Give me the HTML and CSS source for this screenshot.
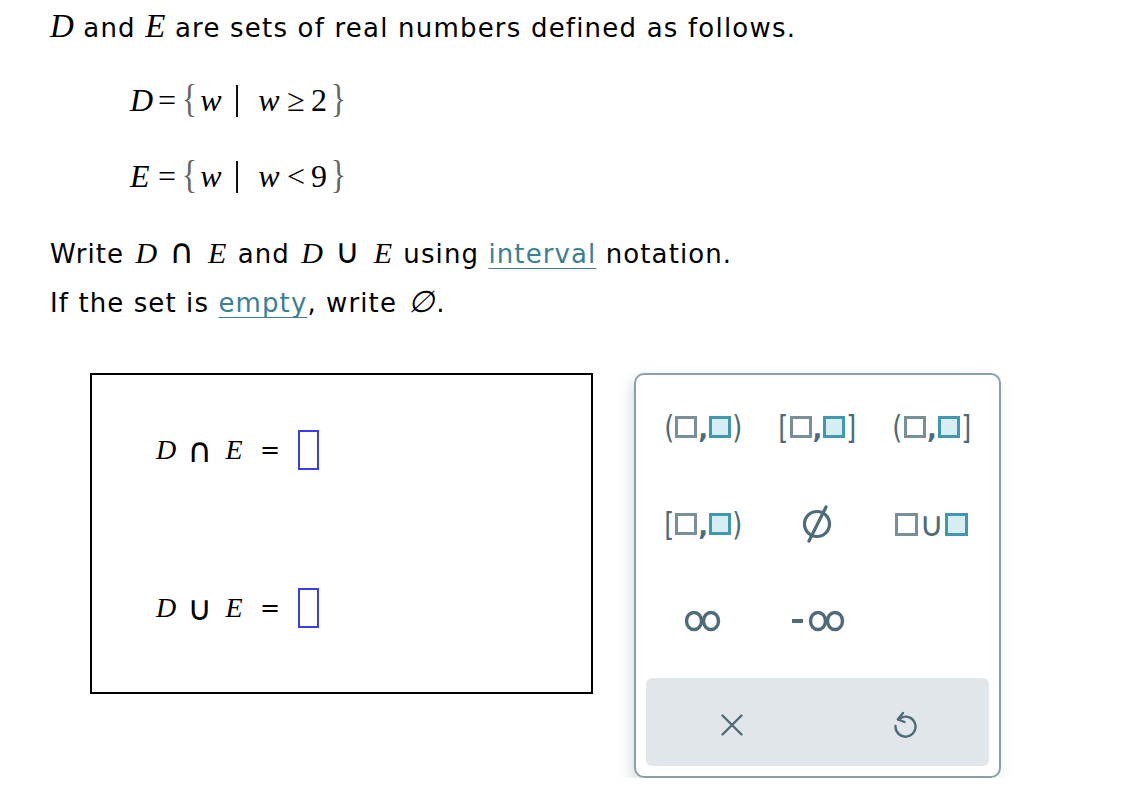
FILE: index.html
```html
<!DOCTYPE html>
<html>
<head>
<meta charset="utf-8">
<link rel="stylesheet" href="styles.css">
</head>
<body>
<div class="page">
  <p class="intro"><span class="mi big">D</span> and <span class="mi big">E</span> are sets of real numbers defined as follows.</p>
  <div class="defs">
    <div class="def"><span class="t tD">D</span><span class="t teq">=</span><span class="t tb">{</span><span class="t tw">w</span><span class="bar"></span><span class="t tw">w</span><span class="t trel">≥</span><span class="t tn">2</span><span class="t tb">}</span></div>
    <div class="def"><span class="t tD">E</span><span class="t teq">=</span><span class="t tb">{</span><span class="t tw">w</span><span class="bar"></span><span class="t tw">w</span><span class="t trel">&lt;</span><span class="t tn">9</span><span class="t tb">}</span></div>
  </div>
  <p class="instr first">Write <span class="mi">D</span> <span class="so">∩</span> <span class="mi">E</span> and <span class="mi">D</span> <span class="so">∪</span> <span class="mi">E</span> using <a class="link">interval</a> notation.</p>
  <p class="instr">If the set is <a class="link">empty</a>, write <span class="mi">∅</span>.</p>

  <div class="work">
    <div class="answers">
      <div class="ans"><span class="a amv">D</span><span class="a aop">∩</span><span class="a amv">E</span><span class="a aeq">=</span><span class="box"></span></div>
      <div class="ans"><span class="a amv">D</span><span class="a aop">∪</span><span class="a amv">E</span><span class="a aeq">=</span><span class="box"></span></div>
    </div>
    <div class="keypad">
      <div class="keys">
        <div class="key"><span class="p">(</span><span class="sq"></span><span class="cm">,</span><span class="sq f"></span><span class="p">)</span></div>
        <div class="key"><span class="p">[</span><span class="sq"></span><span class="cm">,</span><span class="sq f"></span><span class="p">]</span></div>
        <div class="key"><span class="p">(</span><span class="sq"></span><span class="cm">,</span><span class="sq f"></span><span class="p">]</span></div>
        <div class="key"><span class="p">[</span><span class="sq"></span><span class="cm">,</span><span class="sq f"></span><span class="p">)</span></div>
        <div class="key">
          <svg width="40" height="40" viewBox="0 0 40 40"><circle cx="20" cy="20" r="12.5" fill="none" stroke="#4d6b78" stroke-width="3.2"/><line x1="29" y1="3" x2="12" y2="37" stroke="#4d6b78" stroke-width="3.2" stroke-linecap="round"/></svg>
        </div>
        <div class="key"><span class="sq big"></span><span class="cup">∪</span><span class="sq big f"></span></div>
        <div class="key">
          <svg width="38" height="26" viewBox="0 0 38 26"><ellipse cx="10" cy="13" rx="7.5" ry="8.5" fill="none" stroke="#4d6b78" stroke-width="3.4"/><ellipse cx="27" cy="13" rx="7.5" ry="8.5" fill="none" stroke="#4d6b78" stroke-width="3.4"/></svg>
        </div>
        <div class="key shift">
          <span class="minus"></span>
          <svg width="38" height="26" viewBox="0 0 38 26"><ellipse cx="10" cy="13" rx="7.5" ry="8.5" fill="none" stroke="#4d6b78" stroke-width="3.4"/><ellipse cx="27" cy="13" rx="7.5" ry="8.5" fill="none" stroke="#4d6b78" stroke-width="3.4"/></svg>
        </div>
        <div class="key"></div>
      </div>
      <div class="actions">
        <div class="act">
          <svg width="24" height="24" viewBox="0 0 24 24"><path d="M2.5 2.5 L21.5 21.5 M21.5 2.5 L2.5 21.5" stroke="#4d6b78" stroke-width="2.4" stroke-linecap="round"/></svg>
        </div>
        <div class="act">
          <svg width="28" height="30" viewBox="0 0 28 30"><path d="M9.5 9.5 A10 10 0 1 1 6.5 16" fill="none" stroke="#4d6b78" stroke-width="2.4" stroke-linecap="round"/><path d="M14 3 L8.8 9.3 L15.5 12" fill="none" stroke="#4d6b78" stroke-width="2.4" stroke-linecap="round" stroke-linejoin="round"/></svg>
        </div>
      </div>
    </div>
  </div>
</div>
</body>
</html>
```

FILE: styles.css
```css
html, body { margin: 0; padding: 0; background: #fff; }
body { font-family: "DejaVu Sans", Verdana, sans-serif; color: #000; }
.page { padding: 6px 0 0 50px; }
p { margin: 0; }
.intro { font-size: 26px; letter-spacing: 1.2px; line-height: 40px; }
.instr { font-size: 26px; letter-spacing: 1.1px; line-height: 48px; }
.instr.first { margin-top: 32px; }
.mi { font-family: "Liberation Serif", "Times New Roman", serif; font-style: italic; font-size: 30px; letter-spacing: 0; }
.instr .mi { margin: 0 2px; }
.mi.big { font-size: 33px; }
.so { font-size: 34px; line-height: 1; margin: 0 1px; }
.link { color: #3a7f95; text-decoration: underline; text-underline-offset: 5px; text-decoration-thickness: 1px; }

.defs { padding: 31px 0 0 80px; display: flex; flex-direction: column; gap: 34px; }
.def { display: flex; align-items: center; height: 42px; font-family: "Liberation Serif", "Times New Roman", serif; font-size: 32px; }
.t { display: inline-block; text-align: center; }
.tD { font-style: italic; width: 24px; text-align: left; }
.teq { width: 26px; }
.tb { width: 17px; color: #666; font-size: 40px; transform: scaleX(0.8); margin-top: -4px; }
.tw { font-style: italic; width: 28px; }
.bar { display: inline-block; width: 2px; height: 32px; background: #111; margin: 2px 17px 0 11px; }
.trel { width: 26px; }
.tn { width: 20px; }

.work { display: flex; align-items: flex-start; gap: 41px; margin: 46px 0 0 40px; }
.answers { width: 503px; height: 321px; border: 2px solid #000; display: flex; flex-direction: column; padding: 53px 0 0 63px; box-sizing: border-box; gap: 114px; }
.ans { display: flex; align-items: center; height: 44px; }
.a { display: inline-block; text-align: center; }
.amv { font-family: "Liberation Serif", "Times New Roman", serif; font-style: italic; font-size: 28px; width: 22px; }
.aop { font-size: 34px; line-height: 1; width: 46px; }
.aeq { font-size: 24px; width: 50px; }
.box { width: 17px; height: 36px; border: 2px solid #3b3bf2; display: inline-block; margin-left: 3px; }

.keypad { width: 367px; height: 405px; box-sizing: border-box; border: 2px solid #8aa0a8; border-radius: 10px; box-shadow: -3px 6px 14px rgba(120,140,150,0.28); padding: 22px 10px 10px; display: flex; flex-direction: column; }
.keys { display: grid; grid-template-columns: repeat(3, 1fr); grid-template-rows: 97px 97px 60px; }
.key { display: flex; align-items: center; justify-content: center; height: 60px; color: #4d6b78; }
.key.shift { padding-left: 4px; }
.p { font-family: "DejaVu Sans", sans-serif; font-size: 32px; color: #4d6b78; line-height: 1; transform: scaleX(0.8); }
.sq { width: 16px; height: 16px; border: 3px solid #7a9099; display: inline-block; }
.sq.big { width: 17px; height: 17px; }
.sq.f { border-color: #3f97b0; background: #d5edf3; }
.cm { font-size: 26px; font-weight: bold; color: #4d6b78; margin: 0 1px; align-self: flex-end; padding-bottom: 13px; }
.cup { font-size: 34px; color: #4d6b78; margin: 0 1px; line-height: 1; }
.minus { display: inline-block; width: 11px; height: 4px; background: #4d6b78; margin-right: 5px; }
.actions { margin-top: auto; height: 88px; background: #e0e6e9; border-radius: 6px; display: grid; grid-template-columns: 1fr 1fr; align-items: center; justify-items: center; }
.act { display: flex; align-items: center; justify-content: center; padding-top: 6px; }
```
